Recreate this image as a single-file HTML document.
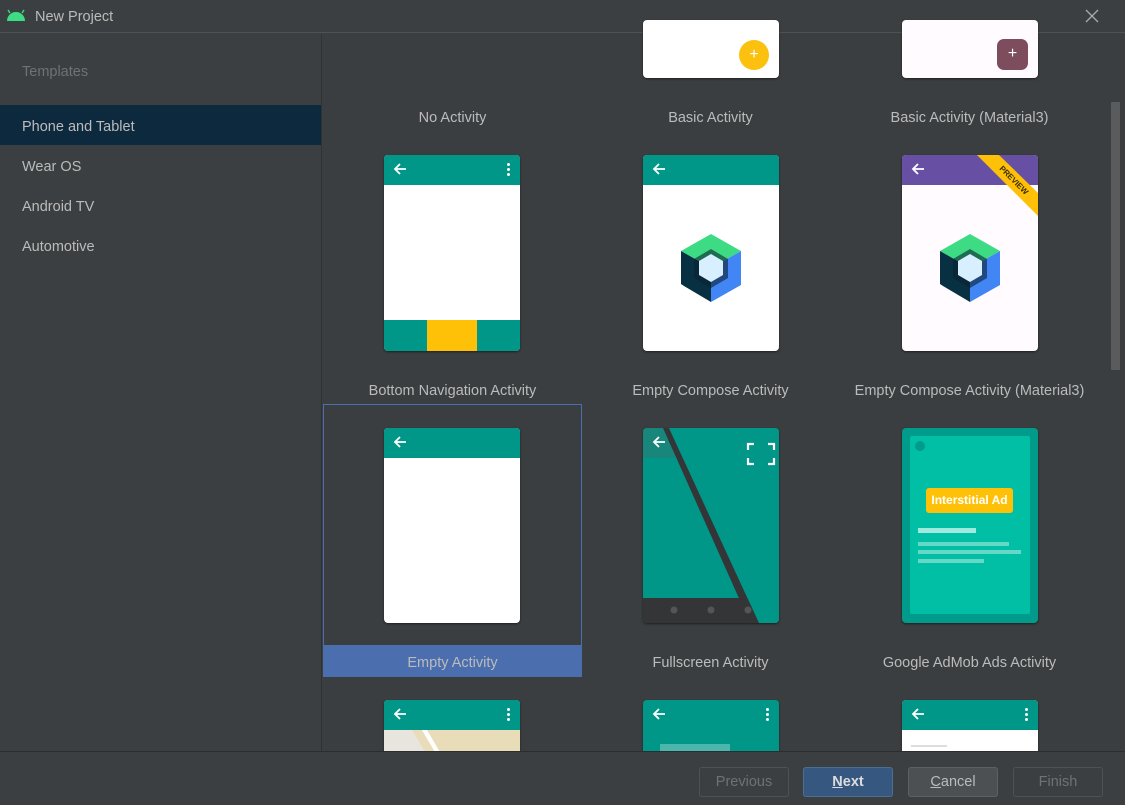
<!DOCTYPE html>
<html><head><meta charset="utf-8"><style>
*{margin:0;padding:0;box-sizing:border-box}
body{width:1125px;height:805px;background:#3c3f41;font-family:"Liberation Sans",sans-serif;position:relative;overflow:hidden;color:#bbbbbb}
.a{position:absolute}
.title{left:0;top:0;width:1125px;height:33px;border-bottom:1px solid #515151;background:#3c3f41}
.side{left:0;top:34px;width:322px;height:717px;background:#3c3f41;border-right:1px solid #2f3133}
.side div{position:absolute;left:22px;font-size:14.5px;color:#bbbbbb}
.content{left:323px;top:34px;width:802px;height:717px;background:#3b3e40}
.card{position:absolute;width:136px;background:#fff;border-radius:4px;overflow:hidden;box-shadow:0 1px 2px rgba(0,0,0,.5)}
.tb{position:absolute;left:0;top:0;width:100%;height:30px;background:#009688}
.arr{position:absolute;left:9px;top:7px}
.dots{position:absolute;right:10px;top:8px;width:3px}
.dots i{display:block;width:3px;height:3px;background:#fff;border-radius:50%;margin-bottom:2px}
.lbl{position:absolute;width:259px;text-align:center;font-size:14.5px;color:#bbbbbb}
.btn{position:absolute;top:767px;width:90px;height:30px;border:1px solid #5e6060;border-radius:3px;text-align:center;line-height:29px;font-size:14.5px}
</style></head><body>
<div class="a title">
 <svg class="a" style="left:6px;top:9px" width="20" height="13" viewBox="0 0 20 13"><path d="M1 12 A9 9 0 0 1 19 12 Z" fill="#3ddc84"/><path d="M4 4 L2 1 M16 4 L18 1" stroke="#3ddc84" stroke-width="1.4"/></svg>
 <div class="a" style="left:35px;top:9px;font-size:14.5px;color:#bbbbbb">New Project</div>
 <svg class="a" style="left:1085px;top:9px" width="14" height="14"><path d="M1 1L13 13M13 1L1 13" stroke="#aaa" stroke-width="1.3"/></svg>
</div>
<div class="a side">
 <div style="top:30px;color:#6f7173">Templates</div>
 <div style="left:0;top:71px;width:321px;height:40px;background:#0d293e"></div>
 <div style="top:85px">Phone and Tablet</div>
 <div style="top:125px">Wear OS</div>
 <div style="top:165px">Android TV</div>
 <div style="top:205px">Automotive</div>
</div>
<div class="a content"></div>
<div class="a" style="left:1111px;top:102px;width:9px;height:268px;background:#595b5d"></div>

<div class="card" style="left:643px;top:20px;height:58px"><div class="a" style="left:96px;top:20px;width:30px;height:30px;border-radius:50%;background:#fcc10e;color:#fff;text-align:center;line-height:29px;font-size:16px">+</div></div>
<div class="card" style="left:902px;top:20px;height:58px;background:#fffbfe"><div class="a" style="left:95px;top:19px;width:31px;height:31px;border-radius:7px;background:#7d4d5e;color:#fff;text-align:center;line-height:30px;font-size:16px">+</div></div>
<div class="lbl" style="left:323px;top:110px">No Activity</div>
<div class="lbl" style="left:581px;top:110px">Basic Activity</div>
<div class="lbl" style="left:840px;top:110px">Basic Activity (Material3)</div>

<div class="card" style="left:384px;top:155px;height:196px">
 <div class="tb"><svg class="arr" width="14" height="14"><path d="M13 7H2M7 2L2 7L7 12" stroke="#fff" stroke-width="1.8" fill="none"/></svg><div class="dots"><i></i><i></i><i></i></div></div>
 <div class="a" style="left:0;top:165px;width:136px;height:31px;background:#009688"></div>
 <div class="a" style="left:43px;top:165px;width:50px;height:31px;background:#ffc107"></div>
</div>
<div class="card" style="left:643px;top:155px;height:196px">
 <div class="tb"><svg class="arr" width="14" height="14"><path d="M13 7H2M7 2L2 7L7 12" stroke="#fff" stroke-width="1.8" fill="none"/></svg></div>
 <svg class="a" style="left:38px;top:79px" width="60" height="68" viewBox="0 0 60 68"><polygon points="0,17 30,0 60,17 30,34" fill="#3ddc84"/><polygon points="0,17 30,34 30,68 3,52 0,50" fill="#073042"/><polygon points="60,17 60,51 30,68 30,34" fill="#4285f4"/><polygon points="30,15 47,25 47,44 30,54 13,44 13,25" fill="#0b2230" opacity=".6"/><polygon points="30,20 42,27 42,41 30,48 18,41 18,27" fill="#d7effe"/></svg>
</div>
<div class="card" style="left:902px;top:155px;height:196px;background:#fffbfe">
 <div class="tb" style="background:#6750a4"><svg class="arr" width="14" height="14"><path d="M13 7H2M7 2L2 7L7 12" stroke="#fff" stroke-width="1.8" fill="none"/></svg></div>
 <svg class="a" style="left:0;top:0" width="136" height="70"><polygon points="75,0 97,0 136,38 136,61" fill="#ffc107"/><text x="0" y="0" text-anchor="middle" font-size="8" font-weight="bold" fill="#3a2c00" transform="translate(110,27) rotate(45)" font-family="Liberation Sans">PREVIEW</text></svg>
 <svg class="a" style="left:38px;top:79px" width="60" height="68" viewBox="0 0 60 68"><polygon points="0,17 30,0 60,17 30,34" fill="#3ddc84"/><polygon points="0,17 30,34 30,68 3,52 0,50" fill="#073042"/><polygon points="60,17 60,51 30,68 30,34" fill="#4285f4"/><polygon points="30,15 47,25 47,44 30,54 13,44 13,25" fill="#0b2230" opacity=".6"/><polygon points="30,20 42,27 42,41 30,48 18,41 18,27" fill="#d7effe"/></svg>
</div>
<div class="lbl" style="left:323px;top:383px">Bottom Navigation Activity</div>
<div class="lbl" style="left:581px;top:383px">Empty Compose Activity</div>
<div class="lbl" style="left:840px;top:383px">Empty Compose Activity (Material3)</div>

<div class="a" style="left:323px;top:404px;width:259px;height:273px;border:1px solid #4b6eaf"></div>
<div class="a" style="left:323px;top:645px;width:259px;height:32px;background:#4b6eaf"></div>
<div class="card" style="left:384px;top:428px;height:195px">
 <div class="tb"><svg class="arr" width="14" height="14"><path d="M13 7H2M7 2L2 7L7 12" stroke="#fff" stroke-width="1.8" fill="none"/></svg></div>
</div>
<div class="card" style="left:643px;top:428px;height:195px;background:#009688">
 <svg class="a" style="left:0;top:0" width="136" height="195"><rect x="0" y="0" width="32" height="30" fill="#18867b"/><rect x="0" y="170" width="136" height="25" fill="#333537"/><polygon points="20,0 26,0 116,195 107,195" fill="#333537"/><polygon points="26,0 136,0 136,195 116,195" fill="#009688"/><circle cx="31" cy="182" r="3.5" fill="#555"/><circle cx="68" cy="182" r="3.5" fill="#555"/><circle cx="105" cy="182" r="3.5" fill="#555"/><polygon points="110,170 136,170 136,195 121,195" fill="#009688"/><path d="M22 14H11M16 9L11 14L16 19" stroke="#fff" stroke-width="1.8" fill="none"/><path d="M105 22V16H111M125 16H131V22M131 30V36H125M111 36H105V30" stroke="#fff" stroke-width="2.2" fill="none"/></svg>
</div>
<div class="card" style="left:902px;top:428px;height:195px;background:#009b8a">
 <div class="a" style="left:8px;top:8px;width:120px;height:178px;background:#00bfa5;border-radius:2px"></div>
 <div class="a" style="left:13px;top:13px;width:10px;height:10px;border-radius:50%;background:#009b8a"></div>
 <div class="a" style="left:24px;top:60px;width:87px;height:25px;background:#ffc107;border-radius:3px;color:#fff;font-size:12px;font-weight:bold;text-align:center;line-height:25px">Interstitial Ad</div>
 <div class="a" style="left:16px;top:100px;width:58px;height:5px;background:#9fe9de"></div>
 <div class="a" style="left:16px;top:114px;width:91px;height:4px;background:#66d8c8"></div>
 <div class="a" style="left:16px;top:122px;width:103px;height:4px;background:#66d8c8"></div>
 <div class="a" style="left:16px;top:131px;width:66px;height:4px;background:#66d8c8"></div>
</div>
<div class="lbl" style="left:323px;top:655px">Empty Activity</div>
<div class="lbl" style="left:581px;top:655px">Fullscreen Activity</div>
<div class="lbl" style="left:840px;top:655px">Google AdMob Ads Activity</div>

<div class="card" style="left:384px;top:700px;height:60px;background:#e8ddb8">
 <div class="tb"><svg class="arr" width="14" height="14"><path d="M13 7H2M7 2L2 7L7 12" stroke="#fff" stroke-width="1.8" fill="none"/></svg><div class="dots"><i></i><i></i><i></i></div></div>
 <svg class="a" style="left:0;top:30px" width="136" height="30"><polygon points="0,0 28,0 46,30 0,30" fill="#e8e5df"/><polygon points="38,0 43,0 57,24 52,24" fill="#fff"/></svg>
</div>
<div class="card" style="left:643px;top:700px;height:60px;background:#009688">
 <div class="tb"><svg class="arr" width="14" height="14"><path d="M13 7H2M7 2L2 7L7 12" stroke="#fff" stroke-width="1.8" fill="none"/></svg><div class="dots"><i></i><i></i><i></i></div></div>
 <div class="a" style="left:17px;top:44px;width:70px;height:16px;background:#4db6ac"></div>
</div>
<div class="card" style="left:902px;top:700px;height:60px">
 <div class="tb"><svg class="arr" width="14" height="14"><path d="M13 7H2M7 2L2 7L7 12" stroke="#fff" stroke-width="1.8" fill="none"/></svg><div class="dots"><i></i><i></i><i></i></div></div>
 <div class="a" style="left:9px;top:45px;width:36px;height:2px;background:#ddd"></div>
</div>

<div class="a" style="left:0;top:751px;width:1125px;height:54px;background:#3c3f41;border-top:1px solid #2b2d2f"></div>
<div class="btn" style="left:699px;color:#6f7173;border-color:#4e5254">Previous</div>
<div class="btn" style="left:803px;background:#365880;border-color:#4c708c;color:#dcdcdc;font-weight:bold"><u>N</u>ext</div>
<div class="btn" style="left:908px;background:#4c5052;color:#bbbbbb"><u>C</u>ancel</div>
<div class="btn" style="left:1013px;color:#6f7173;border-color:#4e5254">Finish</div>
</body></html>
